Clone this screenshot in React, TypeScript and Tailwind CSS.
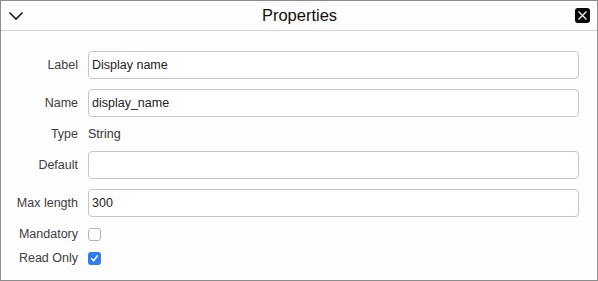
import React from 'react';

function Row({ label, children }: { label: string; children: React.ReactNode }) {
  return (
    <div className="flex items-center">
      <div className="w-[77px] shrink-0 text-right text-[12.5px] leading-[14px] text-[#404040]">{label}</div>
      <div className="ml-[10px] flex-1">{children}</div>
    </div>
  );
}

function TextInput({ value }: { value: string }) {
  return (
    <div className="flex h-[28px] items-center rounded-[4px] border border-[#c6c6c6] bg-white px-[3px] text-[12.5px] text-[#222]">
      {value}
    </div>
  );
}

function Checkbox({ checked }: { checked?: boolean }) {
  if (checked) {
    return (
      <span className="flex h-[13px] w-[13px] items-center justify-center rounded-[3px] bg-[#2f7cf6]">
        <svg width="9" height="9" viewBox="0 0 9 9" fill="none">
          <path d="M1.6 4.8 L3.6 6.8 L7.4 1.8" stroke="white" strokeWidth="1.5" strokeLinecap="round" strokeLinejoin="round" />
        </svg>
      </span>
    );
  }
  return <span className="block h-[13px] w-[13px] rounded-[3px] border border-[#b5b5b5] bg-white" />;
}

export default function App() {
  return (
    <div
      className="flex h-[281px] w-[598px] flex-col border border-[#8c8c8c] bg-[#fdfdfd]"
      style={{ fontFamily: '"Liberation Sans", Arial, sans-serif' }}
    >
      <div className="flex h-[30px] items-center justify-between border-b border-[#cfcfd6] pl-[7px] pr-[7px]">
        <svg width="16" height="10" viewBox="0 0 16 10" fill="none">
          <path d="M1.5 1.5 L8 8 L14.5 1.5" stroke="#1a1a1a" strokeWidth="1.6" />
        </svg>
        <div className="text-[16.5px] text-[#111]">Properties</div>
        <button className="flex h-[15px] w-[15px] items-center justify-center rounded-[3px] bg-black">
          <svg width="9" height="9" viewBox="0 0 9 9" fill="none">
            <path d="M0.5 0.5 L8.5 8.5 M8.5 0.5 L0.5 8.5" stroke="white" strokeWidth="1.1" />
          </svg>
        </button>
      </div>
      <div className="flex flex-col gap-[10px] pr-[18px] pt-[20px]">
        <Row label="Label">
          <TextInput value="Display name" />
        </Row>
        <Row label="Name">
          <TextInput value="display_name" />
        </Row>
        <Row label="Type">
          <div className="text-[12.5px] leading-[14px] text-[#333]">String</div>
        </Row>
        <Row label="Default">
          <TextInput value="" />
        </Row>
        <Row label="Max length">
          <TextInput value="300" />
        </Row>
        <Row label="Mandatory">
          <Checkbox />
        </Row>
        <Row label="Read Only">
          <Checkbox checked />
        </Row>
      </div>
    </div>
  );
}
